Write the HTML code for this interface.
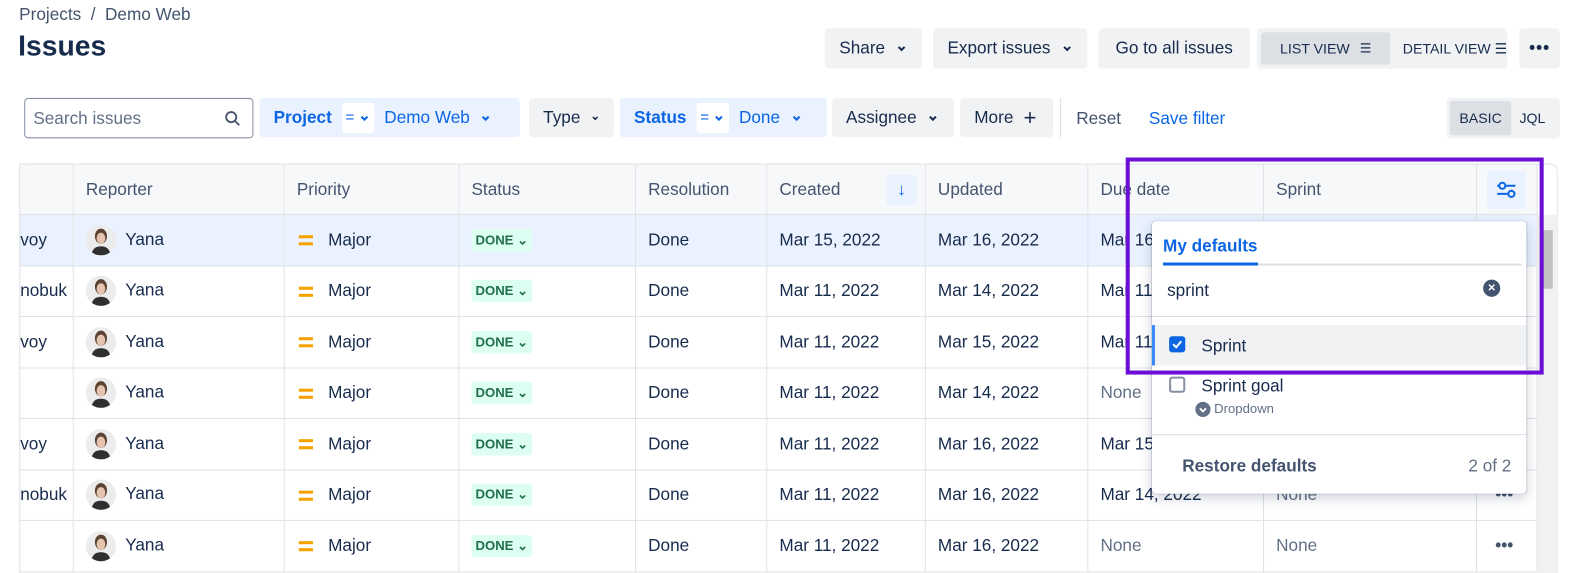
<!DOCTYPE html>
<html style="width:1583px;height:573px;overflow:hidden"><head><meta charset="utf-8"><style>
*{box-sizing:border-box;margin:0;padding:0}
body{width:1583px;height:573px;overflow:hidden;background:#fff;font-family:"Liberation Sans",sans-serif;color:#172b4d;position:relative}
#w{position:absolute;left:0;top:0;width:1583px;height:573px;overflow:hidden}
#s{position:absolute;left:0;top:0;width:1568px;height:568px;transform:scale(1.0096);transform-origin:0 0}
.a{position:absolute}
.btn{position:absolute;background:#f1f2f4;border-radius:4px;font-size:17px;color:#172b4d;display:flex;align-items:center;justify-content:center;gap:10px;white-space:nowrap}
.fb{position:absolute;top:97px;height:39px;border-radius:4px;display:flex;align-items:center;font-size:17px;padding:0 14px;gap:10px;white-space:nowrap}
.blue{background:#e9f2fe;color:#0c66e4}
.gray{background:#f1f2f4;color:#172b4d}
.eq{background:#fff;border-radius:3px;height:30px;width:32px;display:flex;align-items:center;justify-content:center;color:#0c66e4;font-size:15px;gap:4px}
table{position:absolute;left:19px;top:162px;width:1503px;border-collapse:collapse;table-layout:fixed;font-size:17px}
td,th{border:1px solid #dfe1e6;height:50.5px;padding:0 0 0 12px;white-space:nowrap;overflow:hidden;text-align:left;font-weight:normal}
th{background:#f7f8f9;color:#44546f;height:50px;position:relative}
.r1 td{background:#e9f2fe}
.av{display:inline-block;vertical-align:middle;margin-right:9px}
.pr{display:inline-block;width:14px;height:10px;border-top:3px solid #f5a100;border-bottom:3px solid #f5a100;vertical-align:middle;margin-right:15px;margin-left:2px}
.done{display:inline-block;background:#dcfff1;color:#216e4e;font-weight:bold;font-size:13px;padding:3px 4px;border-radius:3px}
.gr{color:#626f86}
.dot{font-weight:bold;color:#44546f;padding-left:18px}
</style></head><body>
<svg width="0" height="0" style="position:absolute"><defs>
<symbol id="cv" viewBox="0 0 12 12"><path d="M3 4.5l3 3 3-3" stroke="currentColor" stroke-width="2" fill="none"/></symbol>
<symbol id="av" viewBox="0 0 30 30"><circle cx="15" cy="15" r="15" fill="#ececec"/><ellipse cx="15" cy="11" rx="6" ry="7.5" fill="#5b4434"/><ellipse cx="15" cy="13" rx="4.3" ry="5.5" fill="#e6c3ae"/><path d="M6 27c2-5 5-6 9-6s7 1 9 6a15 15 0 0 1-18 0z" fill="#2f2f2f"/></symbol>
</defs></svg>
<div id="w"><div id="s">
<div class="a" style="left:19px;top:5px;font-size:17px;color:#44546f">Projects &nbsp;/&nbsp; Demo Web</div>
<div class="a" style="left:18px;top:30px;font-size:28px;font-weight:bold;color:#172b4d">Issues</div>

<div class="btn" style="left:817px;top:28px;width:96px;height:40px">Share <svg width="12" height="12"><use href="#cv"/></svg></div>
<div class="btn" style="left:924px;top:28px;width:153px;height:40px">Export issues <svg width="12" height="12"><use href="#cv"/></svg></div>
<div class="btn" style="left:1088px;top:28px;width:150px;height:40px">Go to all issues</div>
<div class="btn" style="left:1245px;top:28px;width:248px;height:40px;justify-content:flex-start;padding-left:4px;font-size:14px;gap:12px">
 <span style="background:#dcdfe4;border-radius:3px;height:32px;width:131px;display:flex;align-items:center;justify-content:center;gap:10px">LIST VIEW <span style="font-size:13px">☰</span></span>
 <span>DETAIL VIEW ☰</span></div>
<div class="btn" style="left:1505px;top:28px;width:40px;height:40px;font-weight:bold;letter-spacing:1px">•••</div>

<div class="a" style="left:24px;top:97px;width:227px;height:40px;border:1px solid #8590a2;border-radius:4px;font-size:17px;color:#626f86;padding:10px 8px">Search issues
 <svg class="a" style="right:12px;top:11px" width="16" height="16"><circle cx="7" cy="7" r="5" stroke="#44546f" stroke-width="1.8" fill="none"/><path d="M11 11l4 4" stroke="#44546f" stroke-width="1.8"/></svg></div>
<div class="fb blue" style="left:257px;width:258px"><b>Project</b><span class="eq">= <svg width="12" height="12"><use href="#cv"/></svg></span>Demo Web <svg width="12" height="12"><use href="#cv"/></svg></div>
<div class="fb gray" style="left:524px;width:84px">Type <svg width="12" height="12"><use href="#cv"/></svg></div>
<div class="fb blue" style="left:614px;width:205px"><b>Status</b><span class="eq">= <svg width="12" height="12"><use href="#cv"/></svg></span>Done <svg width="12" height="12"><use href="#cv"/></svg></div>
<div class="fb gray" style="left:824px;width:121px">Assignee <svg width="12" height="12"><use href="#cv"/></svg></div>
<div class="fb gray" style="left:951px;width:92px">More <span style="font-size:22px">+</span></div>
<div class="a" style="left:1050px;top:97px;width:1px;height:39px;background:#dcdfe4"></div>
<div class="a" style="left:1066px;top:108px;font-size:17px;color:#44546f">Reset</div>
<div class="a" style="left:1138px;top:108px;font-size:17px;color:#0c66e4">Save filter</div>
<div class="btn" style="left:1433px;top:97px;width:112px;height:40px;justify-content:flex-start;padding-left:3px;font-size:14px;gap:8px"><span style="background:#dcdfe4;border-radius:3px;height:34px;width:61px;display:flex;align-items:center;justify-content:center">BASIC</span>JQL</div>

<div class="a" style="left:19px;top:162px;width:1524px;height:420px;border:1px solid #dfe1e6;border-bottom:none;border-radius:8px 8px 0 0"></div>
<table>
<colgroup><col style="width:53px"><col style="width:209px"><col style="width:173px"><col style="width:175px"><col style="width:130px"><col style="width:157px"><col style="width:161px"><col style="width:174px"><col style="width:211px"><col style="width:60px"></colgroup>
<tr><th></th><th>Reporter</th><th>Priority</th><th>Status</th><th>Resolution</th><th>Created <span style="position:absolute;right:8px;top:10px;background:#e9f2fe;color:#0c66e4;width:30px;height:30px;border-radius:3px;text-align:center;line-height:30px">↓</span></th><th>Updated</th><th>Due date</th><th>Sprint</th><th style="padding:0"><span style="display:block;margin:0 auto 0 10px;width:38px;height:38px;background:#e9f2fe;border-radius:3px"><svg width="38" height="38"><path d="M10 15h18M10 23h18" stroke="#0c66e4" stroke-width="2"/><circle cx="15" cy="15" r="3" fill="#e9f2fe" stroke="#0c66e4" stroke-width="2"/><circle cx="24" cy="23" r="3" fill="#e9f2fe" stroke="#0c66e4" stroke-width="2"/></svg></span></th></tr>
<tr class="r1"><td style="padding-left:0">voy</td><td><svg class="av" width="30" height="30"><use href="#av"/></svg>Yana</td><td><span class="pr"></span>Major</td><td><span class="done">DONE ⌄</span></td><td>Done</td><td>Mar 15, 2022</td><td>Mar 16, 2022</td><td>Mar 16</td><td></td><td></td></tr>
<tr><td style="padding-left:0">nobuk</td><td><svg class="av" width="30" height="30"><use href="#av"/></svg>Yana</td><td><span class="pr"></span>Major</td><td><span class="done">DONE ⌄</span></td><td>Done</td><td>Mar 11, 2022</td><td>Mar 14, 2022</td><td>Mar 11</td><td></td><td></td></tr>
<tr><td style="padding-left:0">voy</td><td><svg class="av" width="30" height="30"><use href="#av"/></svg>Yana</td><td><span class="pr"></span>Major</td><td><span class="done">DONE ⌄</span></td><td>Done</td><td>Mar 11, 2022</td><td>Mar 15, 2022</td><td>Mar 11</td><td></td><td></td></tr>
<tr><td></td><td><svg class="av" width="30" height="30"><use href="#av"/></svg>Yana</td><td><span class="pr"></span>Major</td><td><span class="done">DONE ⌄</span></td><td>Done</td><td>Mar 11, 2022</td><td>Mar 14, 2022</td><td class="gr">None</td><td></td><td></td></tr>
<tr><td style="padding-left:0">voy</td><td><svg class="av" width="30" height="30"><use href="#av"/></svg>Yana</td><td><span class="pr"></span>Major</td><td><span class="done">DONE ⌄</span></td><td>Done</td><td>Mar 11, 2022</td><td>Mar 16, 2022</td><td>Mar 15</td><td></td><td></td></tr>
<tr><td style="padding-left:0">nobuk</td><td><svg class="av" width="30" height="30"><use href="#av"/></svg>Yana</td><td><span class="pr"></span>Major</td><td><span class="done">DONE ⌄</span></td><td>Done</td><td>Mar 11, 2022</td><td>Mar 16, 2022</td><td>Mar 14, 2022</td><td class="gr">None</td><td class="dot">•••</td></tr>
<tr><td></td><td><svg class="av" width="30" height="30"><use href="#av"/></svg>Yana</td><td><span class="pr"></span>Major</td><td><span class="done">DONE ⌄</span></td><td>Done</td><td>Mar 11, 2022</td><td>Mar 16, 2022</td><td class="gr">None</td><td class="gr">None</td><td class="dot">•••</td></tr>
</table>
<div class="a" style="left:1523px;top:213px;width:19px;height:360px;background:#f1f1f1"></div>
<div class="a" style="left:1526px;top:228px;width:12px;height:58px;background:#c1c1c1"></div>

<div class="a" style="left:1141px;top:219px;width:371px;height:270px;background:#fff;border-radius:4px;box-shadow:0 4px 12px rgba(9,30,66,.2),0 0 1px rgba(9,30,66,.3)">
 <div class="a" style="left:11px;top:15px;font-size:17px;font-weight:bold;color:#0c66e4">My defaults</div>
 <div class="a" style="left:11px;top:42px;width:355px;height:2px;background:#dcdfe4"></div>
 <div class="a" style="left:11px;top:41px;width:94px;height:3px;background:#0c66e4"></div>
 <div class="a" style="left:15px;top:59px;font-size:17px">sprint</div>
 <div class="a" style="left:328px;top:58px;width:17px;height:17px;border-radius:50%;background:#44546f;color:#fff;font-size:10px;text-align:center;line-height:17px;font-weight:bold">✕</div>
 <div class="a" style="left:0;top:94px;width:371px;height:1px;background:#dcdfe4"></div>
 <div class="a" style="left:0;top:103px;width:371px;height:40px;background:#f1f2f4;border-left:3px solid #388bff"></div>
 <div class="a" style="left:17px;top:114px;width:16px;height:16px;border-radius:3px;background:#0c66e4"><svg width="16" height="16"><path d="M4 8l3 3 5-6" stroke="#fff" stroke-width="2" fill="none"/></svg></div>
 <div class="a" style="left:49px;top:114px;font-size:17px">Sprint</div>
 <div class="a" style="left:17px;top:154px;width:16px;height:16px;border-radius:3px;border:2px solid #8590a2"></div>
 <div class="a" style="left:49px;top:154px;font-size:17px">Sprint goal</div>
 <div class="a" style="left:43px;top:178px;font-size:13px;color:#626f86"><span style="display:inline-block;width:15px;height:15px;border-radius:50%;background:#626f86;vertical-align:middle"><svg width="15" height="15"><path d="M4.5 6.5l3 3 3-3" stroke="#fff" stroke-width="1.8" fill="none"/></svg></span> Dropdown</div>
 <div class="a" style="left:0;top:211px;width:371px;height:1px;background:#dcdfe4"></div>
 <div class="a" style="left:30px;top:233px;font-size:17px;font-weight:bold;color:#44546f">Restore defaults</div>
 <div class="a" style="right:15px;top:233px;font-size:17px;color:#626f86">2 of 2</div>
</div>
<div class="a" style="left:1115px;top:156px;width:414px;height:215px;border:4px solid #6c0fd6"></div>
</div></div>
</body></html>
